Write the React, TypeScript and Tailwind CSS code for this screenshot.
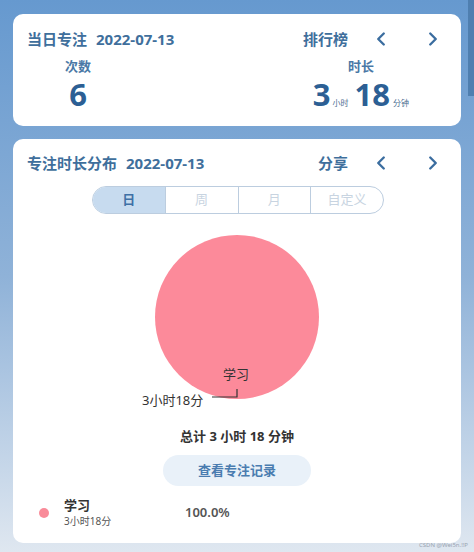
import { ChevronLeft, ChevronRight } from 'lucide-react'

const font = { fontFamily: '"Noto Sans", "Noto Sans CJK SC", sans-serif' }

function Arrows() {
  return (
    <div className="flex items-center gap-[30px] text-[#3b6d9f]">
      <ChevronLeft className="w-[22px] h-[22px]" strokeWidth={2.6} />
      <ChevronRight className="w-[22px] h-[22px]" strokeWidth={2.6} />
    </div>
  )
}

function CardHeader({ title, action }: { title: string; action: string }) {
  return (
    <div className="flex items-center justify-between pl-[14px] pr-[17px]">
      <div className="text-[15px] font-bold text-[#3f6f9c] flex gap-[9px]">
        <span>{title}</span>
        <span>2022-07-13</span>
      </div>
      <div className="flex items-center gap-[22px]">
        <span className="text-[15px] font-bold text-[#3f6f9c]">{action}</span>
        <Arrows />
      </div>
    </div>
  )
}

const tabs = ['日', '周', '月', '自定义']

export default function App() {
  return (
    <div
      className="relative w-full h-[552px] overflow-hidden bg-gradient-to-b from-[#6699cf] via-[#8fb2d8] to-[#dfe7f0] px-[13px] pt-[14px]"
      style={font}
    >
      <div className="absolute right-0 top-0 w-[6px] h-[96px] bg-[#4f7fb0]" />

      {/* daily summary */}
      <div className="bg-white rounded-[10px] h-[112px] pt-[14px]">
        <CardHeader title="当日专注" action="排行榜" />
        <div className="flex justify-between mt-[6px]">
          <div className="flex flex-col items-center w-[130px]">
            <span className="text-[13px] font-semibold text-[#4a78a6]">次数</span>
            <span className="text-[31px] font-bold leading-[36px] text-[#2c5f94]">6</span>
          </div>
          <div className="flex flex-col items-center mr-[52px]">
            <span className="text-[13px] font-semibold text-[#4a78a6]">时长</span>
            <div className="flex items-baseline text-[#2c5f94] leading-[36px]">
              <span className="text-[31px] font-bold">3</span>
              <span className="text-[8px] ml-[2px] mr-[6px] text-[#4a6d8f]">小时</span>
              <span className="text-[31px] font-bold">18</span>
              <span className="text-[8px] ml-[3px] text-[#4a6d8f]">分钟</span>
            </div>
          </div>
        </div>
      </div>

      {/* distribution */}
      <div className="bg-white rounded-[10px] h-[404px] mt-[13px] pt-[13px]">
        <CardHeader title="专注时长分布" action="分享" />

        <div className="flex justify-center mt-[11px] ml-[2px]">
          <div className="flex w-[292px] h-[28px] rounded-full border border-[#bccddf] overflow-hidden">
            {tabs.map((t, i) => (
              <div
                key={t}
                className={`flex-1 flex items-center justify-center text-[13px] ${
                  i === 0 ? 'bg-[#c7dbef] text-[#3f70a6] font-semibold' : 'text-[#c8d4e1]'
                } ${i > 0 ? 'border-l border-[#bccddf]' : ''}`}
              >
                {t}
              </div>
            ))}
          </div>
        </div>

        <div className="relative h-[190px] mt-[3px]">
          <svg width="448" height="190" viewBox="0 0 448 190" className="absolute left-0 top-0">
            <circle cx="224" cy="100" r="82" fill="#fc8a9a" />
            <polyline points="224,172 224,180 199,180" fill="none" stroke="#333" strokeWidth="1.2" />
          </svg>
          <span className="absolute left-[210px] top-[148px] text-[13px] text-[#333]">学习</span>
          <span className="absolute left-[129px] top-[174px] text-[13px] text-[#333]">3小时18分</span>
        </div>

        <div className="text-center text-[13px] font-bold text-[#333] mt-[20px]">总计 3 小时 18 分钟</div>

        <div className="flex justify-center mt-[9px]">
          <div className="w-[148px] h-[31px] rounded-full bg-[#e9f1f9] flex items-center justify-center text-[13px] font-bold text-[#4a7cb0]">
            查看专注记录
          </div>
        </div>

        <div className="flex items-center mt-[11px] pl-[26px]">
          <div className="w-[10px] h-[10px] rounded-full bg-[#f98b99]" />
          <div className="flex flex-col ml-[15px] w-[121px]">
            <span className="text-[13px] font-bold text-[#333] leading-[17px]">学习</span>
            <span className="text-[10px] text-[#555] leading-[14px]">3小时18分</span>
          </div>
          <span className="text-[13px] font-semibold text-[#555]">100.0%</span>
        </div>
      </div>

      <div className="absolute right-[6px] bottom-[2px] text-[6px] text-[#9aa4b0]">CSDN @Wei5n.!!P</div>
    </div>
  )
}
